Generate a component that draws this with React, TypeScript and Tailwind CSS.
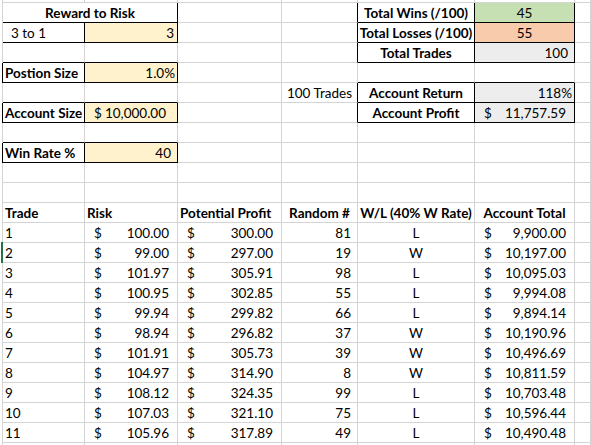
import type { ReactNode } from 'react';

type Cell = { t?: ReactNode; cls?: string; span?: number };

const tan = 'bg-[#fff2cc]';
const grey = 'bg-[#ededed]';

const money = (v: string, pr = 'pr-[6px]') => (
  <span className={`flex w-full justify-between pl-[7px] ${pr}`}>
    <span>$</span>
    <span>{v}</span>
  </span>
);

const trades: [number, string, string, number, string, string][] = [
  [1, '100.00', '300.00', 81, 'L', '9,900.00'],
  [2, '99.00', '297.00', 19, 'W', '10,197.00'],
  [3, '101.97', '305.91', 98, 'L', '10,095.03'],
  [4, '100.95', '302.85', 55, 'L', '9,994.08'],
  [5, '99.94', '299.82', 66, 'L', '9,894.14'],
  [6, '98.94', '296.82', 37, 'W', '10,190.96'],
  [7, '101.91', '305.73', 39, 'W', '10,496.69'],
  [8, '104.97', '314.90', 8, 'W', '10,811.59'],
  [9, '108.12', '324.35', 99, 'L', '10,703.48'],
  [10, '107.03', '321.10', 75, 'L', '10,596.44'],
  [11, '105.96', '317.89', 49, 'L', '10,490.48'],
];

const blank = (n: number): Cell[] => Array.from({ length: n }, () => ({}));

const rows: Cell[][] = [
  [
    { t: 'Reward to Risk', span: 2, cls: 'font-bold justify-center' },
    {}, {},
    { t: 'Total Wins (/100)', cls: 'font-bold justify-center' },
    { t: '45', cls: 'bg-[#c6e0b4] justify-center' },
    {},
  ],
  [
    { t: '3 to 1', cls: 'pl-[8px]' },
    { t: '3', cls: `${tan} justify-end pr-[3px]` },
    {}, {},
    { t: 'Total Losses (/100)', cls: 'font-bold justify-center' },
    { t: '55', cls: 'bg-[#f8cbad] justify-center' },
    {},
  ],
  [
    {}, {}, {}, {},
    { t: 'Total Trades', cls: 'font-bold justify-center' },
    { t: '100', cls: `${grey} justify-end pr-[6px]` },
    {},
  ],
  [
    { t: 'Postion Size', cls: 'font-bold' },
    { t: '1.0%', cls: `${tan} justify-end pr-[2px]` },
    ...blank(5),
  ],
  [
    {}, {}, {},
    { t: '100 Trades', cls: 'justify-center' },
    { t: 'Account Return', cls: 'font-bold justify-center' },
    { t: '118%', cls: `${grey} justify-end pr-[2px]` },
    {},
  ],
  [
    { t: 'Account Size', cls: 'font-bold' },
    { t: money('10,000.00', 'pr-[9px]'), cls: tan },
    {}, {},
    { t: 'Account Profit', cls: 'font-bold justify-center' },
    { t: money('11,757.59'), cls: grey },
    {},
  ],
  blank(7),
  [
    { t: 'Win Rate %', cls: 'font-bold' },
    { t: '40', cls: `${tan} justify-end pr-[6px]` },
    ...blank(5),
  ],
  blank(7),
  blank(7),
  [
    { t: 'Trade', cls: 'font-bold' },
    { t: 'Risk', cls: 'font-bold' },
    { t: 'Potential Profit', cls: 'font-bold' },
    { t: 'Random #', cls: 'font-bold justify-center' },
    { t: 'W/L (40% W Rate)', cls: 'font-bold justify-center' },
    { t: 'Account Total', cls: 'font-bold justify-center' },
    {},
  ],
  ...trades.map(([n, risk, pot, rnd, wl, total]): Cell[] => [
    { t: String(n) },
    { t: money(risk) },
    { t: money(pot) },
    { t: String(rnd), cls: 'justify-end pr-[6px]' },
    { t: wl, cls: 'justify-center' },
    { t: money(total) },
    {},
  ]),
  blank(7),
];

// cells with black "all borders" (row, col)
const boxed = new Set([
  '0,0', '0,1', '1,0', '1,1', '3,0', '3,1', '5,0', '5,1', '7,0', '7,1',
  '0,4', '0,5', '1,4', '1,5', '2,4', '2,5', '4,4', '4,5', '5,4', '5,5',
]);
const isBoxed = (r: number, c: number) => boxed.has(`${r},${c}`);
// the reward box has no dark left edge in the shot
const darkLeft = (r: number) => isBoxed(r, 0) && r > 1;

export default function App() {
  return (
    <div className="w-[591px] h-[445px] overflow-hidden bg-white text-black font-['Lato',sans-serif] text-[13.5px] leading-[13.5px]">
      <div className="grid grid-cols-[3px_82px_93px_104px_76px_117px_100px_1fr] grid-rows-[3px] auto-rows-[20px]">
        {/* strip above row 1 */}
        <div className="border-r border-r-[#d4d4d4]" />
        {[0, 1, 2, 3, 4, 5, 6].map((c) => (
          <div key={c} className="border-r border-b border-[#d4d4d4]" />
        ))}

        {rows.map((row, r) => {
          let col = 0;
          return [
            <div
              key={`g${r}`}
              className={`relative border-r ${darkLeft(r) ? 'border-r-black' : 'border-r-[#d4d4d4]'}`}
            >
              {r === 12 && <div className="absolute left-[1px] top-[-1px] bottom-0 w-[2px] bg-[#217346]" />}
            </div>,
            ...row.map((cell, i) => {
              const c = col;
              const span = cell.span ?? 1;
              col += span;
              const right = isBoxed(r, c) || isBoxed(r, c + span);
              const bottom = isBoxed(r, c) || isBoxed(r + 1, c);
              return (
                <div
                  key={`${r}-${i}`}
                  className={`flex items-end pb-[2px] pl-[2px] pr-[2px] whitespace-nowrap overflow-hidden border-r border-b ${
                    right ? 'border-r-black' : 'border-r-[#d4d4d4]'
                  } ${bottom ? 'border-b-black' : 'border-b-[#d4d4d4]'} ${span === 2 ? 'col-span-2' : ''} ${cell.cls ?? ''}`}
                >
                  {cell.t}
                </div>
              );
            }),
          ];
        })}
      </div>
    </div>
  );
}
